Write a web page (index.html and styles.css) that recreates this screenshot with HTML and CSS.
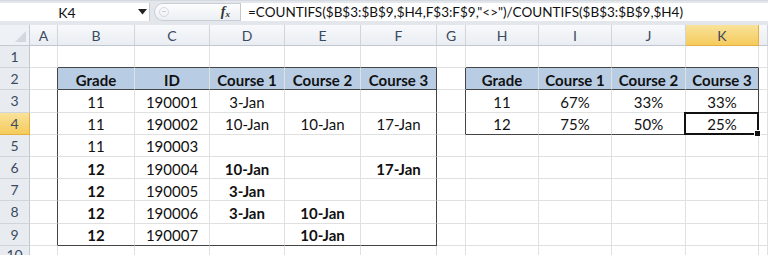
FILE: index.html
```html
<!DOCTYPE html>
<html lang="en">
<head>
  <meta charset="UTF-8" />
  <title>COUNTIFS percentage by grade</title>
  <link rel="stylesheet" href="styles.css">
</head>
<body>
  <div class="formula-bar">
    <div class="name-box">
      <span class="name">K4</span>
      <svg class="drop" width="9" height="6" viewBox="0 0 9 6"><path d="M0 0h9L4.5 5.5z" fill="#222"/></svg>
    </div>
    <div class="fx-buttons">
      <svg class="grip" width="12" height="12" viewBox="0 0 12 12"><circle cx="6" cy="6" r="4.5" fill="none" stroke="#d6dae0"/><path d="M4 5.5h4" stroke="#c8cdd4"/></svg>
      <span class="fx">f<sub>x</sub></span>
    </div>
    <div class="formula">=COUNTIFS($B$3:$B$9,$H4,F$3:F$9,"&lt;&gt;")/COUNTIFS($B$3:$B$9,$H4)</div>
  </div>

  <div class="sheet">
    <!-- column headers -->
    <div class="corner"><svg width="11" height="11" viewBox="0 0 11 11"><path d="M11 0v11H0z" fill="#d3d8df"/></svg></div>
    <div class="ch">A</div><div class="ch">B</div><div class="ch">C</div><div class="ch">D</div>
    <div class="ch">E</div><div class="ch">F</div><div class="ch">G</div><div class="ch">H</div>
    <div class="ch">I</div><div class="ch">J</div><div class="ch on">K</div><div class="ch"></div>

    <!-- row 1 -->
    <div class="rh">1</div>
    <div class="c"></div><div class="c bd"></div><div class="c bd"></div><div class="c bd"></div>
    <div class="c bd"></div><div class="c bd"></div><div class="c"></div><div class="c bd"></div>
    <div class="c bd"></div><div class="c bd"></div><div class="c bd"></div><div class="c"></div>

    <!-- row 2 -->
    <div class="rh">2</div>
    <div class="c rd"></div>
    <div class="c hd bd">Grade</div><div class="c hd bd">ID</div><div class="c hd bd">Course 1</div>
    <div class="c hd bd">Course 2</div><div class="c hd bd rd">Course 3</div>
    <div class="c rd"></div>
    <div class="c hd bd">Grade</div><div class="c hd bd">Course 1</div><div class="c hd bd">Course 2</div>
    <div class="c hd bd rd">Course 3</div>
    <div class="c"></div>

    <!-- row 3 -->
    <div class="rh">3</div>
    <div class="c rd"></div>
    <div class="c">11</div><div class="c">190001</div><div class="c">3-Jan</div><div class="c"></div><div class="c rd"></div>
    <div class="c rd"></div>
    <div class="c">11</div><div class="c">67%</div><div class="c">33%</div><div class="c rd">33%</div>
    <div class="c"></div>

    <!-- row 4 -->
    <div class="rh on">4</div>
    <div class="c rd"></div>
    <div class="c">11</div><div class="c">190002</div><div class="c">10-Jan</div><div class="c">10-Jan</div><div class="c rd">17-Jan</div>
    <div class="c rd"></div>
    <div class="c bd">12</div><div class="c bd">75%</div><div class="c bd">50%</div><div class="c bd rd sel">25%</div>
    <div class="c"></div>

    <!-- row 5 -->
    <div class="rh">5</div>
    <div class="c rd"></div>
    <div class="c">11</div><div class="c">190003</div><div class="c"></div><div class="c"></div><div class="c rd"></div>
    <div class="c"></div><div class="c"></div><div class="c"></div><div class="c"></div><div class="c"></div><div class="c"></div>

    <!-- row 6 -->
    <div class="rh">6</div>
    <div class="c rd"></div>
    <div class="c b">12</div><div class="c">190004</div><div class="c b">10-Jan</div><div class="c"></div><div class="c b rd">17-Jan</div>
    <div class="c"></div><div class="c"></div><div class="c"></div><div class="c"></div><div class="c"></div><div class="c"></div>

    <!-- row 7 -->
    <div class="rh">7</div>
    <div class="c rd"></div>
    <div class="c b">12</div><div class="c">190005</div><div class="c b">3-Jan</div><div class="c"></div><div class="c rd"></div>
    <div class="c"></div><div class="c"></div><div class="c"></div><div class="c"></div><div class="c"></div><div class="c"></div>

    <!-- row 8 -->
    <div class="rh">8</div>
    <div class="c rd"></div>
    <div class="c b">12</div><div class="c">190006</div><div class="c b">3-Jan</div><div class="c b">10-Jan</div><div class="c rd"></div>
    <div class="c"></div><div class="c"></div><div class="c"></div><div class="c"></div><div class="c"></div><div class="c"></div>

    <!-- row 9 -->
    <div class="rh">9</div>
    <div class="c rd"></div>
    <div class="c b bd">12</div><div class="c bd">190007</div><div class="c bd"></div><div class="c b bd">10-Jan</div><div class="c bd rd"></div>
    <div class="c"></div><div class="c"></div><div class="c"></div><div class="c"></div><div class="c"></div><div class="c"></div>

    <!-- row 10 -->
    <div class="rh">10</div>
    <div class="c"></div><div class="c"></div><div class="c"></div><div class="c"></div><div class="c"></div><div class="c"></div>
    <div class="c"></div><div class="c"></div><div class="c"></div><div class="c"></div><div class="c"></div><div class="c"></div>
  </div>
</body>
</html>
```

FILE: styles.css
```css
* {
  box-sizing: border-box;
}
body {
  margin: 0;
  width: 768px;
  height: 255px;
  overflow: hidden;
  background: #ffffff;
  font-family: Lato, "Liberation Sans", sans-serif;
  color: #111;
}

/* formula bar */
.formula-bar {
  display: flex;
  height: 25px;
  padding: 2px 0 4px;
  background: #e3e7ec;
  border-top: 1px solid #d4d9df;
}
.name-box {
  display: flex;
  align-items: center;
  width: 150px;
  background: #fff;
  border-right: 1px solid #c4cad2;
}
.name {
  width: 134px;
  text-align: center;
  font-size: 14px;
}
.drop {
  margin-left: 4px;
}
.fx-buttons {
  display: flex;
  align-items: center;
  justify-content: space-between;
  width: 86px;
  margin-left: 4px;
  padding: 0 10px 0 3px;
  background: linear-gradient(#fdfdfe, #eceff3);
  border: 1px solid #c8ced6;
  border-right: 0;
  border-radius: 10px 0 0 10px;
}
.fx {
  font-family: "Liberation Serif", serif;
  font-style: italic;
  font-weight: bold;
  font-size: 14px;
  color: #333;
}
.fx sub {
  font-size: 9px;
  vertical-align: -1px;
}
.formula {
  flex: 1;
  background: #fff;
  border-left: 1px solid #c4cad2;
  padding-left: 7px;
  font-size: 13.5px;
  line-height: 19px;
  white-space: nowrap;
  overflow: hidden;
}

/* sheet grid */
.sheet {
  display: grid;
  grid-template-columns: 30px 28px 77px 75px 75px 76px 76px 29px 73px 73px 74px 73px 9px;
  grid-template-rows: 21px repeat(9, 22.2px) 1fr;
  height: 230px;
}
.sheet > div {
  display: flex;
  align-items: center;
  justify-content: center;
  font-size: 15px;
}
.corner {
  background: #eef1f5;
  border-right: 1px solid #c5cbd3;
  border-bottom: 1px solid #c5cbd3;
  align-items: flex-end !important;
  justify-content: flex-end !important;
  padding: 0 3px 3px 0;
}
.ch {
  background: linear-gradient(#f8f9fb, #e9edf2);
  border-right: 1px solid #d0d5dc;
  border-bottom: 1px solid #c0c7d0;
  color: #3a4a5e;
  font-size: 14px !important;
}
.rh {
  background: #e8ecf1;
  border-right: 1px solid #c0c7d0;
  border-bottom: 1px solid #d0d5dc;
  color: #3a4a5e;
  font-size: 14px !important;
}
.rh:last-child {
  align-items: flex-start !important;
  padding-top: 2px;
}
.ch.on,
.rh.on {
  background: linear-gradient(#f9e29a, #f5cb5c);
  border-color: #e2b13f;
}
.c {
  border-right: 1px solid #e0e0e0;
  border-bottom: 1px solid #e0e0e0;
  padding-top: 2px;
}
.hd {
  background: #b8cce4;
  font-weight: bold;
}
.b {
  font-weight: bold;
}
.rd {
  border-right-color: #454545 !important;
}
.bd {
  border-bottom-color: #454545 !important;
}
.sel {
  position: relative;
}
.sel::after {
  content: "";
  position: absolute;
  top: -1px;
  left: -2px;
  right: -1px;
  bottom: -1px;
  border: 2px solid #111;
}
.sel::before {
  content: "";
  position: absolute;
  right: -3px;
  bottom: -3px;
  width: 5px;
  height: 5px;
  background: #111;
  border: 1px solid #fff;
  z-index: 1;
}
```
